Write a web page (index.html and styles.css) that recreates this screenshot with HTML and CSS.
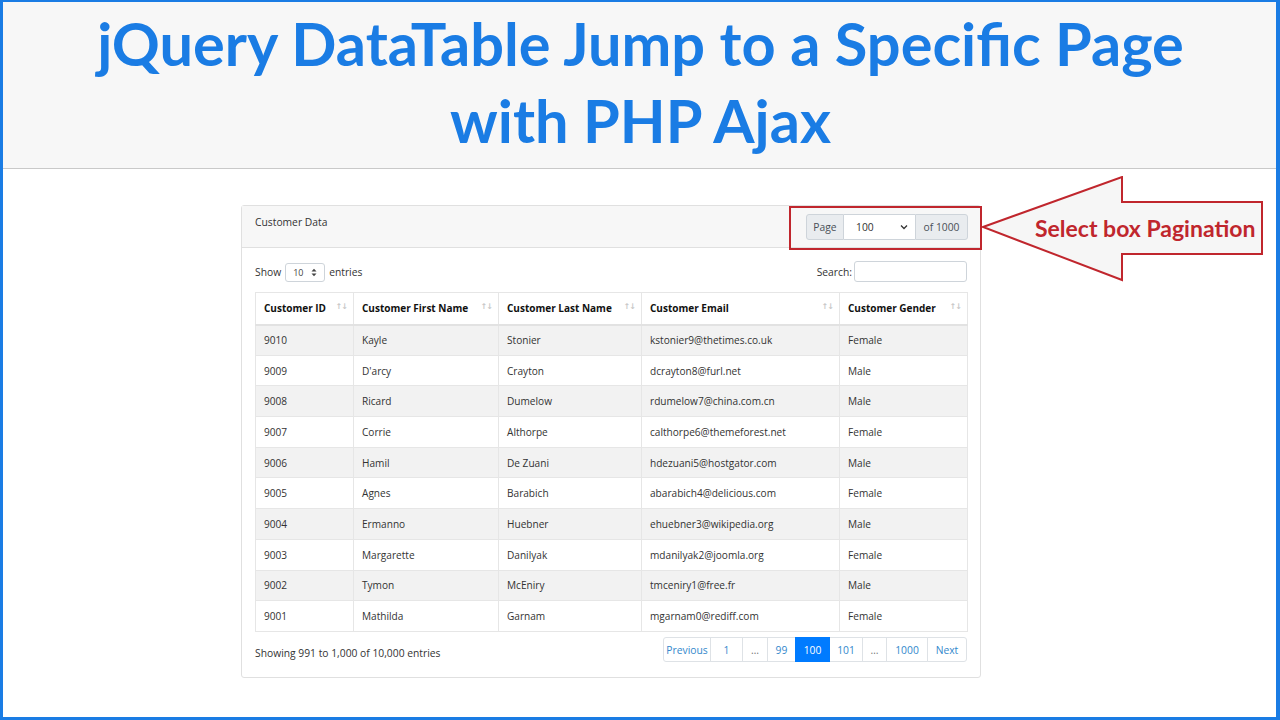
FILE: index.html
```html
<!DOCTYPE html>
<html>
<head>
<meta charset="utf-8">
<link rel="stylesheet" href="styles.css">
</head>
<body>
<div class="frame">
  <header class="hero">
    <h1 class="title">jQuery DataTable Jump to a Specific Page<br>with PHP Ajax</h1>
  </header>
  <main class="content">
    <section class="card">
      <div class="card-header">
        <span class="card-title">Customer Data</span>
        <div class="input-group">
          <span class="addon">Page</span>
          <span class="page-select">100
            <svg class="chev" width="8" height="6" viewBox="0 0 8 6"><path d="M1 1.5 L4 4.5 L7 1.5" fill="none" stroke="#333" stroke-width="1.3"/></svg>
          </span>
          <span class="addon">of 1000</span>
        </div>
      </div>
      <div class="card-body">
        <div class="dt-top">
          <div class="length">Show <span class="len-select">10 <svg width="6" height="9" viewBox="0 0 6 9"><path d="M0.5 3.5 L3 0.8 L5.5 3.5 Z M0.5 5.5 L3 8.2 L5.5 5.5 Z" fill="#444"/></svg></span> entries</div>
          <div class="search">Search: <span class="search-input"></span></div>
        </div>
        <table class="dt">
          <colgroup>
            <col class="c1"><col class="c2"><col class="c3"><col class="c4"><col class="c5">
          </colgroup>
          <thead>
            <tr>
              <th>Customer ID<span class="sort">↑↓</span></th>
              <th>Customer First Name<span class="sort">↑↓</span></th>
              <th>Customer Last Name<span class="sort">↑↓</span></th>
              <th>Customer Email<span class="sort">↑↓</span></th>
              <th>Customer Gender<span class="sort">↑↓</span></th>
            </tr>
          </thead>
          <tbody>
            <tr><td>9010</td><td>Kayle</td><td>Stonier</td><td>kstonier9@thetimes.co.uk</td><td>Female</td></tr>
            <tr><td>9009</td><td>D'arcy</td><td>Crayton</td><td>dcrayton8@furl.net</td><td>Male</td></tr>
            <tr><td>9008</td><td>Ricard</td><td>Dumelow</td><td>rdumelow7@china.com.cn</td><td>Male</td></tr>
            <tr><td>9007</td><td>Corrie</td><td>Althorpe</td><td>calthorpe6@themeforest.net</td><td>Female</td></tr>
            <tr><td>9006</td><td>Hamil</td><td>De Zuani</td><td>hdezuani5@hostgator.com</td><td>Male</td></tr>
            <tr><td>9005</td><td>Agnes</td><td>Barabich</td><td>abarabich4@delicious.com</td><td>Female</td></tr>
            <tr><td>9004</td><td>Ermanno</td><td>Huebner</td><td>ehuebner3@wikipedia.org</td><td>Male</td></tr>
            <tr><td>9003</td><td>Margarette</td><td>Danilyak</td><td>mdanilyak2@joomla.org</td><td>Female</td></tr>
            <tr><td>9002</td><td>Tymon</td><td>McEniry</td><td>tmceniry1@free.fr</td><td>Male</td></tr>
            <tr><td>9001</td><td>Mathilda</td><td>Garnam</td><td>mgarnam0@rediff.com</td><td>Female</td></tr>
          </tbody>
        </table>
        <div class="dt-bottom">
          <div class="info">Showing 991 to 1,000 of 10,000 entries</div>
          <ul class="pagination">
            <li class="pg w-prev">Previous</li>
            <li class="pg w-1">1</li>
            <li class="pg w-dots muted">…</li>
            <li class="pg w-99">99</li>
            <li class="pg w-100 active">100</li>
            <li class="pg w-101">101</li>
            <li class="pg w-dots2 muted">…</li>
            <li class="pg w-1000">1000</li>
            <li class="pg w-next">Next</li>
          </ul>
        </div>
      </div>
    </section>
  </main>
  <div class="highlight"></div>
  <div class="callout">
    <svg class="arrow" width="290" height="110" viewBox="0 0 290 110">
      <polygon points="2,51 141,1 141,26 281,26 281,78 141,78 141,104" fill="#f6f6f6" stroke="#c0262d" stroke-width="2" stroke-linejoin="miter"/>
    </svg>
    <span class="callout-text">Select box Pagination</span>
  </div>
</div>
</body>
</html>
```
FILE: styles.css
```css
* { box-sizing: border-box; }
html, body { margin: 0; padding: 0; }
body { width: 1280px; height: 720px; background: #fff; overflow: hidden; }

.frame {
  position: relative;
  width: 1280px;
  height: 720px;
  border: 3px solid #1a7ce4;
  border-top-width: 2px;
  border-right-width: 4px;
  background: #fff;
}

.hero {
  height: 167px;
  background: #f7f7f7;
  border-bottom: 1px solid #c9c9c9;
  padding-top: 3px;
}
.title {
  margin: 0;
  font-family: Lato, "Open Sans", sans-serif;
  font-weight: 700;
  font-size: 59.5px;
  line-height: 77px;
  color: #1a7ce4;
  text-align: center;
  letter-spacing: 0;
  padding-left: 2px;
}

.content {
  padding-top: 36px;
  padding-left: 238px;
  font-family: "Open Sans", "Noto Sans", sans-serif;
  color: #212529;
}

.card {
  width: 740px;
  height: 473px;
  border: 1px solid #e0e0e0;
  border-radius: 3px;
  background: #fff;
}
.card-header {
  height: 42px;
  background: #f7f7f7;
  border-bottom: 1px solid #e0e0e0;
  display: flex;
  justify-content: space-between;
  align-items: flex-start;
  padding: 0 12px 0 13px;
}
.card-title {
  font-size: 10.3px;
  color: #333;
  padding-top: 9px;
  line-height: 14px;
}
.input-group {
  display: flex;
  margin-top: 8px;
  height: 26px;
  font-size: 10.3px;
  color: #495057;
}
.addon {
  display: flex;
  align-items: center;
  padding: 0 8px;
  background: #e9ecef;
  border: 1px solid #ced4da;
}
.addon:first-child { border-radius: 3px 0 0 3px; width: 38px; justify-content: center; padding: 0; }
.addon:last-child { border-radius: 0 3px 3px 0; width: 53px; justify-content: center; padding: 0; }
.page-select {
  width: 71px;
  display: flex;
  align-items: center;
  justify-content: space-between;
  padding: 0 7px 0 12px;
  background: #fff;
  border-top: 1px solid #ced4da;
  border-bottom: 1px solid #ced4da;
  color: #333;
}

.card-body { padding: 13px 13px 0 13px; }

.dt-top {
  display: flex;
  justify-content: space-between;
  align-items: center;
  height: 22px;
  font-size: 10.3px;
  color: #333;
}
.length { display: flex; align-items: center; gap: 3px; }
.len-select {
  display: inline-flex;
  align-items: center;
  justify-content: space-between;
  width: 40px;
  height: 19px;
  padding: 0 7px 0 7px;
  border: 1px solid #ced4da;
  border-radius: 3px;
  font-size: 9px;
  color: #444;
  margin: 0 1px;
}
.search { display: flex; align-items: center; gap: 2px; margin-top: -1px; }
.search-input {
  width: 113px;
  height: 21px;
  border: 1px solid #ced4da;
  border-radius: 3px;
  background: #fff;
}

.dt {
  margin-top: 9px;
  width: 712px;
  border-collapse: collapse;
  table-layout: fixed;
  font-size: 10.1px;
  border: 1px solid #dee2e6;
}
.c1 { width: 98px; } .c2 { width: 145px; } .c3 { width: 143px; } .c4 { width: 198px; } .c5 { width: 128px; }
.dt th {
  position: relative;
  text-align: left;
  font-weight: 700;
  font-size: 10px;
  color: #111;
  padding: 0 8px;
  height: 32px;
  border: 1px solid #e6e6e6;
  border-bottom: 2px solid #e2e2e2;
  white-space: nowrap;
}
.sort {
  position: absolute;
  right: 6px;
  top: 9px;
  font-size: 8px;
  color: #c8c8c8;
  letter-spacing: -1px;
  font-family: "DejaVu Sans", sans-serif;
}
.dt td {
  height: 30.7px;
  padding: 0 8px;
  color: #333;
  border: 1px solid #e6e6e6;
  white-space: nowrap;
}
.dt tbody tr:nth-child(odd) td { background: #f2f2f2; }

.dt-bottom {
  display: flex;
  justify-content: space-between;
  align-items: center;
  margin-top: 5px;
  height: 26px;
}
.info { font-size: 10.3px; color: #333; padding-top: 7px; }
.pagination {
  display: flex;
  list-style: none;
  margin: 0;
  padding: 0;
  height: 25px;
  font-size: 10.3px;
  margin-right: 0;
}
.pg {
  display: flex;
  align-items: center;
  justify-content: center;
  color: #3388cc;
  border: 1px solid #dee2e6;
  margin-left: -1px;
  background: #fff;
}
.pg.muted { color: #777; }
.pg.active { background: #007bff; border-color: #007bff; color: #fff; position: relative; }
.w-prev { width: 48px; border-radius: 3px 0 0 3px; margin-left: 0; }
.w-1 { width: 33px; }
.w-dots { width: 26px; }
.w-99 { width: 29px; }
.w-100 { width: 35px; }
.w-101 { width: 34px; }
.w-dots2 { width: 25px; }
.w-1000 { width: 42px; }
.w-next { width: 40px; border-radius: 0 3px 3px 0; }

.highlight {
  position: absolute;
  left: 786px;
  top: 204px;
  width: 193px;
  height: 44px;
  border: 2px solid #c0262d;
}
.callout {
  position: absolute;
  left: 978px;
  top: 174px;
  width: 290px;
  height: 110px;
}
.arrow { display: block; }
.callout-text {
  position: absolute;
  left: 54px;
  top: 38px;
  font-family: Lato, "Open Sans", sans-serif;
  font-weight: 700;
  font-size: 23px;
  line-height: 28px;
  color: #c0262d;
  white-space: nowrap;
}
```
